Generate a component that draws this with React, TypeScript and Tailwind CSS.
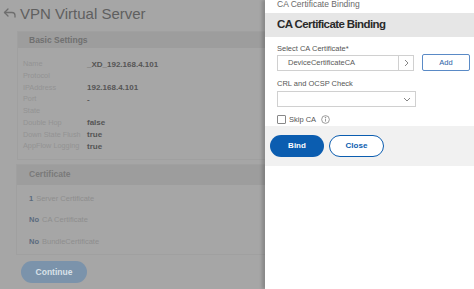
import React from "react";

const basicRows: [string, string][] = [
  ["Name", "_XD_192.168.4.101"],
  ["Protocol", ""],
  ["IPAddress", "192.168.4.101"],
  ["Port", "-"],
  ["State", ""],
  ["Double Hop", "false"],
  ["Down State Flush", "true"],
  ["AppFlow Logging", "true"],
];

const certRows: [string, string][] = [
  ["1", "Server Certificate"],
  ["No", "CA Certificate"],
  ["No", "BundleCertificate"],
];

function BackArrow() {
  return (
    <svg width="13" height="10" viewBox="0 0 13 10" fill="none" stroke="#6e6e6e" strokeWidth="1.3">
      <path d="M5 1 1.5 4.5 5 8" strokeLinecap="round" strokeLinejoin="round" />
      <path d="M1.5 4.5h7.5a3 3 0 0 1 3 3V9" strokeLinecap="round" />
    </svg>
  );
}

function VpnPage() {
  return (
    <div className="relative w-[265px] shrink-0 bg-[#a6a6a6] overflow-hidden pt-[3px]">
      {/* Title */}
      <div className="flex items-center h-[20px] pl-[3px] gap-[4px]">
        <BackArrow />
        <span className="text-[15px] leading-none text-[#5f5f5f]">VPN Virtual Server</span>
      </div>

      {/* Basic Settings */}
      <div className="ml-[17px] w-[270px] mt-[8px] border border-[#a0a0a0]">
        <div className="h-[16px] bg-[#9d9d9d] flex items-center pl-[11px] text-[8.5px] font-bold text-[#707070]">
          Basic Settings
        </div>
        <div className="pt-[11px] pb-[6px] pl-[5px]">
          {basicRows.map(([label, value]) => (
            <div key={label} className="flex h-[11.7px] items-center">
              <span className="w-[64px] text-[7.3px] text-[#939393]">{label}</span>
              <span className="text-[8px] text-[#555] font-semibold">{value}</span>
            </div>
          ))}
        </div>
      </div>

      {/* Certificate */}
      <div className="ml-[16px] w-[270px] mt-[4px] border border-[#a0a0a0]">
        <div className="h-[20px] bg-[#9d9d9d] flex items-center pl-[12px] text-[8.5px] font-bold text-[#7a7a7a]">
          Certificate
        </div>
        <div className="pt-[3px] pb-[2px] pl-[12px]">
          {certRows.map(([count, label]) => (
            <div key={label} className="flex h-[21.5px] items-center gap-[3px] text-[7.5px]">
              <span className="font-bold text-[#5b6b7e]">{count}</span>
              <span className="text-[#8e8e8e]">{label}</span>
            </div>
          ))}
        </div>
      </div>

      <button className="ml-[21px] mt-[6px] w-[66px] h-[22px] rounded-full bg-[#7b93ab] text-[8.5px] font-bold text-[#d9e1e9]">
        Continue
      </button>
    </div>
  );
}

function BindingPanel() {
  return (
    <div className="flex-1 bg-white shadow-[-3px_0_3px_rgba(0,0,0,0.18)] relative flex flex-col">
      <div className="h-[13px] pl-[12px] text-[8.5px] leading-[9px] text-[#6a6a6a]">CA Certificate Binding</div>

      <div className="h-[24px] bg-[#e6e6e6] flex items-center pl-[12px] text-[11.5px] tracking-[-0.6px] font-bold text-[#2a2a2a]">
        CA Certificate Binding
      </div>

      <div className="pl-[12px] pr-[5px] pt-[7px] text-[7.5px]">
        <div className="text-[#555] leading-[9px]">Select CA Certificate*</div>
        <div className="flex items-center mt-[1px]">
          <div className="flex w-[137px] h-[16px] border border-[#d0d0d0]">
            <div className="flex-1 flex items-center pl-[10px] text-[#595959]">DeviceCertificateCA</div>
            <div className="w-[15px] border-l border-[#d0d0d0] flex items-center justify-center">
              <svg width="5" height="8" viewBox="0 0 5 8" fill="none" stroke="#777" strokeWidth="0.9">
                <path d="M1 1l3 3-3 3" />
              </svg>
            </div>
          </div>
          <button className="ml-[8px] w-[48px] h-[17px] border border-[#5a8ac6] rounded-[2px] text-[#2b62a6] text-[7.5px]">
            Add
          </button>
        </div>

        <div className="text-[#555] leading-[9px] mt-[8px]">CRL and OCSP Check</div>
        <div className="w-[139px] h-[16px] border border-[#d0d0d0] mt-[3px] flex items-center justify-end pr-[4px]">
          <svg width="8" height="5" viewBox="0 0 8 5" fill="none" stroke="#777" strokeWidth="0.9">
            <path d="M1 1l3 3 3-3" />
          </svg>
        </div>

        <div className="flex items-center mt-[8px] h-[9px] gap-[3px] text-[#555]">
          <span className="w-[9px] h-[9px] border border-[#888] rounded-[1px]" />
          <span>Skip CA</span>
          <svg width="9" height="9" viewBox="0 0 10 10" fill="none" stroke="#777" strokeWidth="0.8" className="ml-[2px]">
            <circle cx="5" cy="5" r="4.3" />
            <path d="M5 4.3v3" />
            <circle cx="5" cy="2.8" r="0.4" fill="#777" />
          </svg>
        </div>
      </div>

      <div className="mt-[2px] h-[40px] bg-[#f1f1f1] flex items-center pl-[5px] gap-[5px]">
        <button className="w-[54px] h-[22px] rounded-full bg-[#0b5db0] text-white text-[8px] font-bold">Bind</button>
        <button className="w-[55px] h-[22px] rounded-full border-[1.5px] border-[#0b5db0] bg-white text-[#0b5db0] text-[8px] font-bold">
          Close
        </button>
      </div>
    </div>
  );
}

export default function App() {
  return (
    <div className="w-[474px] h-[289px] flex overflow-hidden font-['Liberation_Sans',Arial,sans-serif]">
      <VpnPage />
      <BindingPanel />
    </div>
  );
}
